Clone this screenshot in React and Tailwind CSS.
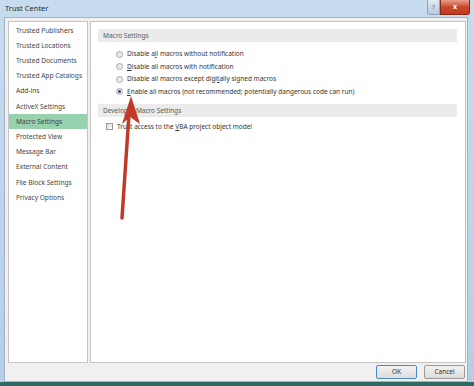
import React from 'react';

const navItems = [
  'Trusted Publishers',
  'Trusted Locations',
  'Trusted Documents',
  'Trusted App Catalogs',
  'Add-ins',
  'ActiveX Settings',
  'Macro Settings',
  'Protected View',
  'Message Bar',
  'External Content',
  'File Block Settings',
  'Privacy Options',
];

function Radio({ checked, children }) {
  return (
    <div className="flex items-center h-[12.5px]">
      <span className="w-[7px] h-[7px] rounded-full border border-[#a8a8a8] bg-gradient-to-br from-[#dedede] to-[#f8f8f8] flex items-center justify-center ml-[25px] mr-[4px]">
        {checked && <span className="w-[3px] h-[3px] rounded-full bg-[#2a4a6a]" />}
      </span>
      <span>{children}</span>
    </div>
  );
}

function Band({ children }) {
  return (
    <div className="h-[13px] bg-[#ebebeb] flex items-center pl-[5px] text-[#5a5a5a] mr-[8px] ml-[7px]">
      {children}
    </div>
  );
}

export default function App() {
  return (
    <div
      className="relative w-[474px] h-[386px] overflow-hidden bg-gradient-to-b from-[#c7dcee] to-[#b6cfe6] flex flex-col text-[#333]"
      style={{ fontFamily: '"Noto Sans", "Open Sans", sans-serif' }}
    >
      {/* title bar */}
      <div className="h-[17px] flex items-start shrink-0">
        <span className="pl-[5px] pt-[3px] text-[7.5px] text-[#1e2a36]">Trust Center</span>
        <div className="ml-auto flex mr-[4px]">
          <div className="w-[13px] h-[15px] bg-gradient-to-b from-[#e3ebf3] to-[#b8c9da] border border-[#8ea4ba] border-t-0 rounded-bl-[3px] flex items-center justify-center text-[6px] text-[#556]">?</div>
          <div className="w-[30px] h-[15px] bg-gradient-to-b from-[#e7a08e] via-[#c9462c] to-[#c23a20] border border-[#8a2a18] border-t-0 rounded-br-[3px] flex items-center justify-center text-[7px] font-bold text-white">x</div>
        </div>
      </div>

      {/* client */}
      <div className="ml-[4px] w-[464px] h-[365px] bg-[#f0f0f0] border border-[#9fb3c8] flex flex-col pt-[3px] pl-[3px] pr-[1px] shrink-0">
        <div className="flex gap-[2px] h-[342px] text-[6.5px]">
          <div className="w-[80px] bg-white border border-[#c4c4c4] pt-[1px] text-[6.6px]">
            {navItems.map((item) => (
              <div
                key={item}
                className={`h-[15.2px] flex items-center pl-[7px] text-[#444] ${item === 'Macro Settings' ? 'bg-[#98d1ae]' : ''}`}
              >
                {item}
              </div>
            ))}
          </div>
          <div className="flex-1 bg-white border border-[#c4c4c4] pt-[7px]">
            <Band>Macro Settings</Band>
            <div className="pt-[6px] text-[#333]">
              <Radio>Disable a<u>l</u>l macros without notification</Radio>
              <Radio><u>D</u>isable all macros with notification</Radio>
              <Radio>Disable all macros except digi<u>t</u>ally signed macros</Radio>
              <Radio checked><u>E</u>nable all macros (not recommended; potentially dangerous code can run)</Radio>
            </div>
            <div className="mt-[6px]">
              <Band>Developer Macro Settings</Band>
            </div>
            <div className="flex items-center mt-[5px] ml-[15px]">
              <span className="w-[7px] h-[7px] border border-[#9a9a9a] bg-gradient-to-br from-[#e0e0e0] to-[#fafafa] mr-[4px]" />
              <span>Trust access to the <u>V</u>BA project object model</span>
            </div>
          </div>
        </div>
        <div className="flex justify-end gap-[7px] mt-[2px] pr-[1px] text-[6.5px]">
          <button className="w-[41px] h-[14px] border border-[#4a8ac4] bg-gradient-to-b from-[#f2f2f2] to-[#dcdcdc] rounded-[2px] text-[#333]">OK</button>
          <button className="w-[41px] h-[14px] border border-[#9a9a9a] bg-gradient-to-b from-[#f2f2f2] to-[#dcdcdc] rounded-[2px] text-[#333]">Cancel</button>
        </div>
      </div>
      <div className="flex-1 bg-[#2d6a62]" />

      {/* annotation arrow */}
      <svg className="absolute left-0 top-0 pointer-events-none" width="474" height="386">
        <line x1="122" y1="218" x2="129" y2="114" stroke="#c0392b" strokeWidth="3.5" strokeLinecap="round" />
        <polygon points="131,96 122,124 130,117 140,124" fill="#c0392b" />
      </svg>
    </div>
  );
}
